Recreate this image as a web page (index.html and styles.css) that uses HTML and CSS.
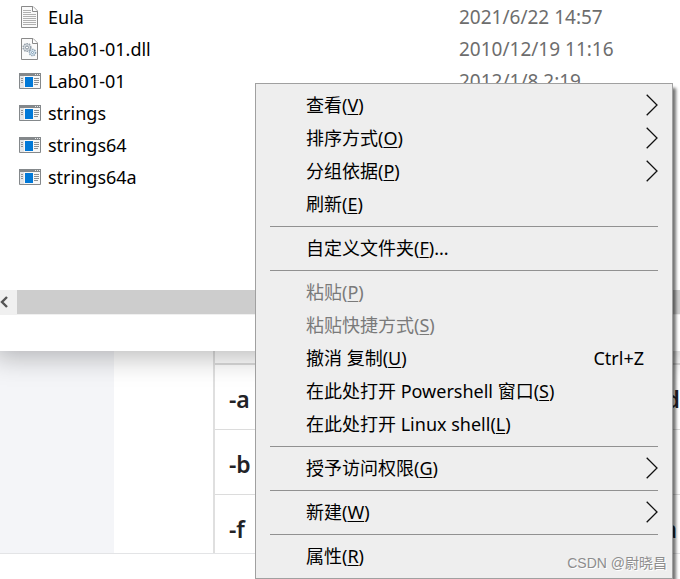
FILE: index.html
```
<!DOCTYPE html>
<html lang="zh-CN">
<head>
<meta charset="utf-8">
<title>Lab01</title>
<link rel="stylesheet" href="styles.css">
</head>
<body>
<svg class="defs" aria-hidden="true">
  <symbol id="text-file" viewBox="0 0 22 24">
    <path d="M2.500 1.500h11.500l4.500 4.500v16.500h-16z" fill="#fafafa" stroke="#8a8a8a"/>
    <path d="M13.500 1.500v5h5" fill="#fff" stroke="#8a8a8a"/>
    <path d="M4 5.500h8M4 7.500h8M4 9.500h13M4 11.500h13M4 13.500h13M4 15.500h13M4 17.500h13M4 19.500h13" stroke="#b0b0b0"/>
  </symbol>
  <symbol id="dll-file" viewBox="0 0 22 24">
    <path d="M2.500 1.500h11.500l4.500 4.500v16.500h-16z" fill="#fafafa" stroke="#8a8a8a"/>
    <path d="M13.500 1.500v5h5" fill="#fff" stroke="#8a8a8a"/>
    <circle cx="8" cy="10.500" r="3.800" fill="#d9dee3" stroke="#9aa4ad" stroke-width="1.600" stroke-dasharray="1.600 .8"/>
    <circle cx="8" cy="10.500" r="1.500" fill="#fff" stroke="#87929c"/>
    <circle cx="13.500" cy="15.500" r="3.100" fill="#dbe9f4" stroke="#8fa3b3" stroke-width="1.500" stroke-dasharray="1.500 .8"/>
    <circle cx="13.500" cy="15.500" r="1" fill="#fff" stroke="#7f9db4"/>
  </symbol>
  <symbol id="program" viewBox="0 0 22 24">
    <path d="M.5 4.500h21v15h-21z" fill="#f7f7f7" stroke="#84888b"/>
    <path d="M1 7h4v12h-4z" fill="#e3e5e7"/>
    <path d="M0 4h22v3h-22z" fill="#84888b"/>
    <path d="M16 5h1v1h-1zM18 5h1v1h-1zM20 5h1v1h-1z" fill="#e8e8e8"/>
    <path d="M6 8h8v10h-8z" fill="#0078d7"/>
    <path d="M2 9.500h2M2 11.500h2M2 13.500h2M15 9.500h5M15 11.500h5M15 13.500h5M15 15.500h4" stroke="#8c9093"/>
  </symbol>
  <symbol id="chevron" viewBox="0 0 12 22">
    <path d="M.7.700 11 11 .7 21.300" fill="none" stroke="#111" stroke-width="1.300"/>
  </symbol>
</svg>

<main class="explorer">
  <div class="pane">
    <table class="files">
      <tbody>
        <tr><td class="name"><span class="entry"><svg class="icon"><use href="#text-file"/></svg>Eula</span></td><td class="date">2021/6/22 14:57</td></tr>
        <tr><td class="name"><span class="entry"><svg class="icon"><use href="#dll-file"/></svg>Lab01-01.dll</span></td><td class="date">2010/12/19 11:16</td></tr>
        <tr><td class="name"><span class="entry"><svg class="icon"><use href="#program"/></svg>Lab01-01</span></td><td class="date">2012/1/8 2:19</td></tr>
        <tr><td class="name"><span class="entry"><svg class="icon"><use href="#program"/></svg>strings</span></td><td class="date"></td></tr>
        <tr><td class="name"><span class="entry"><svg class="icon"><use href="#program"/></svg>strings64</span></td><td class="date"></td></tr>
        <tr><td class="name"><span class="entry"><svg class="icon"><use href="#program"/></svg>strings64a</span></td><td class="date"></td></tr>
      </tbody>
    </table>
  </div>
  <div class="scrollbar">
    <button class="scroll-left" type="button" aria-label="向左滚动"><svg class="scroll-arrow" viewBox="0 0 8 12"><path d="M7 1 2 6l5 5" fill="none" stroke="#555" stroke-width="2.400"/></svg></button>
    <div class="thumb"></div>
  </div>
  <div class="status"></div>
</main>

<section class="document">
  <div class="sidebar"></div>
  <table class="options">
    <tbody>
      <tr class="head"><th></th><td></td></tr>
      <tr><th>-a</th><td>d</td></tr>
      <tr><th>-b</th><td></td></tr>
      <tr class="last"><th>-f</th><td class="inset">a</td></tr>
    </tbody>
  </table>
</section>

<div class="menu" role="menu">
  <button type="button" role="menuitem" class="item"><span>查看(<u>V</u>)</span><svg class="chevron"><use href="#chevron"/></svg></button>
  <button type="button" role="menuitem" class="item"><span>排序方式(<u>O</u>)</span><svg class="chevron"><use href="#chevron"/></svg></button>
  <button type="button" role="menuitem" class="item"><span>分组依据(<u>P</u>)</span><svg class="chevron"><use href="#chevron"/></svg></button>
  <button type="button" role="menuitem" class="item"><span>刷新(<u>E</u>)</span></button>
  <hr class="separator">
  <button type="button" role="menuitem" class="item"><span>自定义文件夹(<u>F</u>)...</span></button>
  <hr class="separator">
  <button type="button" role="menuitem" class="item" disabled><span>粘贴(<u>P</u>)</span></button>
  <button type="button" role="menuitem" class="item" disabled><span>粘贴快捷方式(<u>S</u>)</span></button>
  <button type="button" role="menuitem" class="item"><span>撤消 复制(<u>U</u>)</span><span class="shortcut">Ctrl+Z</span></button>
  <button type="button" role="menuitem" class="item"><span>在此处打开 Powershell 窗口(<u>S</u>)</span></button>
  <button type="button" role="menuitem" class="item"><span>在此处打开 Linux shell(<u>L</u>)</span></button>
  <hr class="separator">
  <button type="button" role="menuitem" class="item"><span>授予访问权限(<u>G</u>)</span><svg class="chevron"><use href="#chevron"/></svg></button>
  <hr class="separator">
  <button type="button" role="menuitem" class="item"><span>新建(<u>W</u>)</span><svg class="chevron"><use href="#chevron"/></svg></button>
  <hr class="separator">
  <button type="button" role="menuitem" class="item"><span>属性(<u>R</u>)</span></button>
</div>
<div class="watermark">CSDN @尉晓昌</div>
</body>
</html>
```
FILE: styles.css
```
* { box-sizing: border-box; }

body {
  position: relative;
  min-height: 579px;
  margin: 0;
  overflow-x: hidden;
  background: #fff;
  color: #000;
  font: 18px/24px "Noto Sans", "Noto Sans CJK SC", sans-serif;
}

table { border-collapse: collapse; border-spacing: 0; }
.defs { position: absolute; width: 0; height: 0; }

/* File window */
.explorer {
  position: relative;
  background: #fff;
  box-shadow: 0 0 26px 6px rgba(0, 0, 0, .28);
}
.pane { min-height: 290px; padding-top: 1px; }
.files { width: 100%; table-layout: fixed; }
.files td { height: 32px; padding: 0; white-space: nowrap; }
.files .name { width: 459px; padding-left: 19px; }
.files .date { color: #6d6d6d; font-size: 19px; }
.entry { display: flex; align-items: center; gap: 7px; }
.icon { width: 22px; height: 24px; flex: none; }

.scrollbar {
  display: flex;
  height: 25px;
  border-bottom: 1px solid #f0f0f0;
  background: #f0f0f0;
}
.scroll-left {
  display: flex;
  align-items: center;
  width: 17px;
  padding: 0;
  border: 0;
  background: #f0f0f0;
}
.scroll-arrow { width: 8px; height: 12px; }
.thumb { flex: 1; background: #cdcdcd; }
.status { height: 36px; }

/* Page behind the window */
.document { display: flex; border-bottom: 1px solid #e3e4e6; }
.sidebar { width: 114px; background: #f4f5f8; }
.options { flex: 1; margin-left: 99px; }
.options tr { height: 65px; border-bottom: 1px solid #dcdcdc; }
.options .head { height: 13px; border-bottom: 2px solid #dcdcdc; }
.options .last { height: 59px; border-bottom: 0; }
.options th,
.options td {
  padding: 22px 0 0;
  color: #222226;
  font-size: 23px;
  font-weight: 600;
  line-height: 24px;
  vertical-align: top;
}
.options .head th,
.options .head td { padding-top: 0; }
.options th,
.options .head th {
  width: 80px;
  padding-left: 14px;
  border-left: 2px solid #dfdfdf;
  text-align: left;
}
.options td { text-align: right; }
.options .inset { padding-right: 3px; }

/* Context menu */
.menu {
  position: absolute;
  top: 83px;
  left: 255px;
  width: 418px;
  padding: 5px 0;
  border: 1px solid #a0a0a0;
  background: #eee;
  box-shadow: 4px 4px 3px -1px rgba(0, 0, 0, .55);
}
.item {
  display: flex;
  align-items: center;
  justify-content: space-between;
  width: 100%;
  height: 33px;
  padding: 0 14px 2px 50px;
  border: 0;
  background: none;
  color: #000;
  font: inherit;
  text-align: left;
  white-space: nowrap;
}
.item:disabled { color: #7a7a7a; }
.item u { text-decoration-thickness: 1px; text-underline-offset: 2px; }
.shortcut { padding-right: 14px; }
.chevron { width: 12px; height: 22px; }
.separator {
  height: 1px;
  margin: 5px 14px;
  border: 0;
  background: #919191;
}

.watermark {
  position: absolute;
  right: 13px;
  bottom: 4px;
  color: #8d8d8d;
  font: 14px/24px "Liberation Sans", "Noto Sans CJK SC", sans-serif;
  text-shadow: 1px 1px 0 #fff;
}
```
